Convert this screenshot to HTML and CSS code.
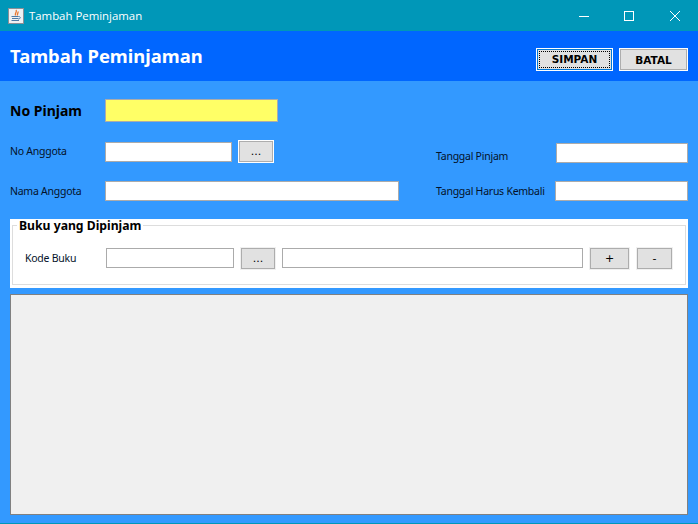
FILE: index.html
```html
<!DOCTYPE html>
<html lang="id">
<head>
    <meta charset="UTF-8">
    <meta name="viewport" content="width=device-width, initial-scale=1.0">
    <title>Tambah Peminjaman</title>
    <link rel="stylesheet" href="styles.css">
</head>
<body>
    <div class="window">
        <div class="titlebar">
            <svg class="app-icon" width="16" height="16" viewBox="0 0 16 16">
                <rect x="0.5" y="0.5" width="15" height="15" fill="#eef0f2" stroke="#8a8f96"/>
                <path d="M8 2C9.5 4 6.5 5 7.5 7.5M10 3.5C10.5 5 9 5.5 9.5 7.5" fill="none" stroke="#e8762d" stroke-width="1.3"/>
                <path d="M3.5 8.5H10.5M4 10.5H10M3.5 12.5H11M10.5 8.5C13 8.5 13 11 10 11" fill="none" stroke="#4c7aa6" stroke-width="1"/>
            </svg>
            <span class="window-title">Tambah Peminjaman</span>
            <div class="window-controls">
                <svg width="10" height="10" viewBox="0 0 10 10" class="ctl-min"><path d="M0 5.5H10" stroke="#fff" fill="none"/></svg>
                <svg width="10" height="10" viewBox="0 0 10 10" class="ctl-max"><rect x="0.5" y="0.5" width="9" height="9" stroke="#fff" fill="none"/></svg>
                <svg width="10" height="10" viewBox="0 0 10 10" class="ctl-close"><path d="M0 0L10 10M10 0L0 10" stroke="#fff" fill="none"/></svg>
            </div>
        </div>

        <div class="header">
            <h1>Tambah Peminjaman</h1>
            <div class="header-actions">
                <button class="btn btn-head btn-focus"><span>SIMPAN</span></button>
                <button class="btn btn-head btn-batal"><span>BATAL</span></button>
            </div>
        </div>

        <div class="content">
            <div class="row row-pinjam">
                <label class="label-big">No Pinjam</label>
                <input type="text" class="field field-yellow">
            </div>

            <div class="row row-anggota">
                <div class="group-left">
                    <label class="label label-no">No Anggota</label>
                    <input type="text" class="field field-no">
                    <button class="btn btn-dots">...</button>
                </div>
                <div class="group-right group-pinjam">
                    <label class="label label-tgl label-pinjam">Tanggal Pinjam</label>
                    <input type="text" class="field field-tgl">
                </div>
            </div>

            <div class="row row-nama">
                <div class="group-left">
                    <label class="label">Nama Anggota</label>
                    <input type="text" class="field field-nama">
                </div>
                <div class="group-right">
                    <label class="label label-tgl label-kembali">Tanggal Harus Kembali</label>
                    <input type="text" class="field field-kembali">
                </div>
            </div>

            <div class="panel">
                <div class="fieldset">
                    <div class="legend">Buku yang Dipinjam</div>
                    <div class="book-row">
                        <label class="label label-kode">Kode Buku</label>
                        <input type="text" class="field field-kode">
                        <button class="btn btn-dots2">...</button>
                        <input type="text" class="field field-judul">
                        <button class="btn btn-plus">+</button>
                        <button class="btn btn-minus">-</button>
                    </div>
                </div>
            </div>

            <div class="table-area"></div>
        </div>
    </div>
</body>
</html>
```

FILE: styles.css
```css
* {
    box-sizing: border-box;
}

body {
    margin: 0;
    font-family: 'Noto Sans', sans-serif;
    background-color: #3399ff;
}

.window {
    display: flex;
    flex-direction: column;
    width: 698px;
    height: 524px;
    border-bottom: 1px solid #0097b8;
    overflow: hidden;
}

.titlebar {
    display: flex;
    align-items: center;
    flex: none;
    height: 31px;
    padding-left: 8px;
    background-color: #0097b8;
    color: #fff;
}

.app-icon {
    flex: none;
}

.window-title {
    margin-left: 5px;
    font-family: 'Open Sans', sans-serif;
    font-size: 11.4px;
}

.window-controls {
    display: flex;
    align-items: center;
    margin-left: auto;
}

.ctl-min {
    margin-right: 35px;
}

.ctl-max {
    margin-right: 36px;
}

.ctl-close {
    margin-right: 18px;
}

.header {
    display: flex;
    align-items: center;
    justify-content: space-between;
    flex: none;
    height: 50px;
    padding: 0 10px;
    background-color: #0066ff;
}

.header h1 {
    margin: 0 0 2px;
    font-family: 'Noto Sans', sans-serif;
    font-size: 18.4px;
    font-weight: bold;
    color: #fff;
}

.header-actions {
    display: flex;
    gap: 6px;
    margin-top: 7px;
}

.btn {
    padding: 0;
    background-color: #e1e1e1;
    border: 1px solid #adadad;
    border-radius: 0;
    font-family: 'DejaVu Sans', sans-serif;
    font-size: 11px;
    color: #000;
}

.btn-head {
    height: 21px;
    font-size: 10.5px;
    font-weight: bold;
    box-shadow: 0 0 0 1px #fff;
}

.btn-focus {
    width: 75px;
    margin-right: 1px;
    border-color: #0078d7;
    padding: 1px;
}

.btn-focus span {
    display: block;
    height: 100%;
    line-height: 15px;
    border: 1px dotted #000;
}

.btn-batal {
    width: 67px;
    margin: 0 1px;
}

.content {
    flex: 1;
    display: flex;
    flex-direction: column;
    padding: 18px 10px 8px;
}

.row {
    display: flex;
    flex: none;
}

.row-pinjam {
    align-items: center;
    height: 23px;
}

.label-big {
    width: 95px;
    font-family: 'Noto Sans', sans-serif;
    font-size: 14px;
    font-weight: bold;
    color: #000;
}

.label {
    flex: none;
    width: 95px;
    font-size: 10.5px;
    letter-spacing: -0.25px;
    color: #04122a;
}

.label-no {
    margin-top: -2px;
}

.field {
    flex: none;
    height: 20px;
    padding: 0 3px;
    background-color: #fff;
    border: 1px solid #ababab;
    border-radius: 0;
}

.field-yellow {
    width: 173px;
    height: 23px;
    background-color: #ffff66;
}

.row-anggota {
    height: 23px;
    margin-top: 18px;
}

.row-nama {
    height: 20px;
    margin-top: 18px;
}

.group-left {
    display: flex;
    align-items: center;
    width: 426px;
    height: 100%;
}

.group-right {
    display: flex;
    align-items: center;
    flex: 1;
}

.group-pinjam {
    height: 20px;
    margin-top: 3px;
}

.label-tgl {
    width: 120px;
}

.label-pinjam {
    margin-top: 6px;
}

.label-kembali {
    width: 119px;
}

.field-no {
    width: 127px;
}

.btn-dots {
    width: 34px;
    height: 21px;
    margin-left: 7px;
    box-shadow: 0 0 0 1px #fff;
}

.field-nama {
    width: 294px;
}

.field-tgl {
    width: 132px;
}

.field-kembali {
    width: 133px;
}

.panel {
    flex: none;
    height: 69px;
    margin-top: 18px;
    padding: 6px 2px 3px;
    background-color: #fff;
}

.fieldset {
    position: relative;
    height: 100%;
    padding: 22px 13px 0 12px;
    border: 1px solid #dddddd;
}

.legend {
    position: absolute;
    top: -6px;
    left: 4px;
    padding: 0 2px;
    background-color: #fff;
    font-family: 'Noto Sans', sans-serif;
    font-size: 12.2px;
    font-weight: bold;
    line-height: 12px;
    color: #000;
}

.book-row {
    display: flex;
    align-items: flex-start;
}

.label-kode {
    width: 81px;
    line-height: 20px;
}

.field-kode {
    width: 128px;
}

.btn-dots2 {
    width: 34px;
    height: 21px;
    margin-left: 7px;
    box-shadow: 0 0 0 1px #f0f0f0;
}

.field-judul {
    width: 301px;
    margin-left: 7px;
}

.btn-plus {
    width: 39px;
    height: 21px;
    margin-left: 7px;
    box-shadow: 0 0 0 1px #f0f0f0;
}

.btn-minus {
    width: 35px;
    height: 21px;
    margin-left: 8px;
    box-shadow: 0 0 0 1px #f0f0f0;
}

.table-area {
    flex: 1;
    margin-top: 6px;
    background-color: #f0f0f0;
    border: 1px solid #808080;
}
```
